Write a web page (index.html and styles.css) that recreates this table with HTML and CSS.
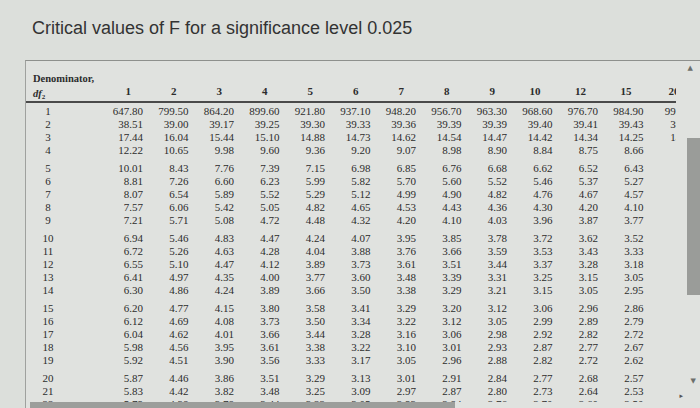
FILE: index.html
```html
<!DOCTYPE html>
<html lang="en">
<head>
<meta charset="utf-8">
<title>Critical values of F</title>
<link rel="stylesheet" href="styles.css">
</head>
<body>
<h1 class="title">Critical values of F for a significance level 0.025</h1>
<div class="panel">
  <div class="viewport">
    <div class="clip">
      <table class="ftable">
        <colgroup>
          <col class="c-label"><col class="c-first">
          <col class="c-num"><col class="c-num"><col class="c-num"><col class="c-num"><col class="c-num"><col class="c-num"><col class="c-num"><col class="c-num"><col class="c-num"><col class="c-num"><col class="c-num">
          <col class="c-last">
        </colgroup>
        <thead>
          <tr>
            <th class="denom">Denominator,<br><i>df</i><sub>2</sub></th>
            <th>1</th><th>2</th><th>3</th><th>4</th><th>5</th><th>6</th><th>7</th><th>8</th><th>9</th><th>10</th><th>12</th><th>15</th><th class="last">20</th>
          </tr>
        </thead>
        <tbody>
          <tr class="first"><td>1</td><td>647.80</td><td>799.50</td><td>864.20</td><td>899.60</td><td>921.80</td><td>937.10</td><td>948.20</td><td>956.70</td><td>963.30</td><td>968.60</td><td>976.70</td><td>984.90</td><td>993.10</td></tr>
          <tr><td>2</td><td>38.51</td><td>39.00</td><td>39.17</td><td>39.25</td><td>39.30</td><td>39.33</td><td>39.36</td><td>39.39</td><td>39.39</td><td>39.40</td><td>39.41</td><td>39.43</td><td>39.45</td></tr>
          <tr><td>3</td><td>17.44</td><td>16.04</td><td>15.44</td><td>15.10</td><td>14.88</td><td>14.73</td><td>14.62</td><td>14.54</td><td>14.47</td><td>14.42</td><td>14.34</td><td>14.25</td><td>14.17</td></tr>
          <tr><td>4</td><td>12.22</td><td>10.65</td><td>9.98</td><td>9.60</td><td>9.36</td><td>9.20</td><td>9.07</td><td>8.98</td><td>8.90</td><td>8.84</td><td>8.75</td><td>8.66</td><td></td></tr>
          <tr class="group"><td>5</td><td>10.01</td><td>8.43</td><td>7.76</td><td>7.39</td><td>7.15</td><td>6.98</td><td>6.85</td><td>6.76</td><td>6.68</td><td>6.62</td><td>6.52</td><td>6.43</td><td></td></tr>
          <tr><td>6</td><td>8.81</td><td>7.26</td><td>6.60</td><td>6.23</td><td>5.99</td><td>5.82</td><td>5.70</td><td>5.60</td><td>5.52</td><td>5.46</td><td>5.37</td><td>5.27</td><td></td></tr>
          <tr><td>7</td><td>8.07</td><td>6.54</td><td>5.89</td><td>5.52</td><td>5.29</td><td>5.12</td><td>4.99</td><td>4.90</td><td>4.82</td><td>4.76</td><td>4.67</td><td>4.57</td><td></td></tr>
          <tr><td>8</td><td>7.57</td><td>6.06</td><td>5.42</td><td>5.05</td><td>4.82</td><td>4.65</td><td>4.53</td><td>4.43</td><td>4.36</td><td>4.30</td><td>4.20</td><td>4.10</td><td></td></tr>
          <tr><td>9</td><td>7.21</td><td>5.71</td><td>5.08</td><td>4.72</td><td>4.48</td><td>4.32</td><td>4.20</td><td>4.10</td><td>4.03</td><td>3.96</td><td>3.87</td><td>3.77</td><td></td></tr>
          <tr class="group"><td>10</td><td>6.94</td><td>5.46</td><td>4.83</td><td>4.47</td><td>4.24</td><td>4.07</td><td>3.95</td><td>3.85</td><td>3.78</td><td>3.72</td><td>3.62</td><td>3.52</td><td></td></tr>
          <tr><td>11</td><td>6.72</td><td>5.26</td><td>4.63</td><td>4.28</td><td>4.04</td><td>3.88</td><td>3.76</td><td>3.66</td><td>3.59</td><td>3.53</td><td>3.43</td><td>3.33</td><td></td></tr>
          <tr><td>12</td><td>6.55</td><td>5.10</td><td>4.47</td><td>4.12</td><td>3.89</td><td>3.73</td><td>3.61</td><td>3.51</td><td>3.44</td><td>3.37</td><td>3.28</td><td>3.18</td><td></td></tr>
          <tr><td>13</td><td>6.41</td><td>4.97</td><td>4.35</td><td>4.00</td><td>3.77</td><td>3.60</td><td>3.48</td><td>3.39</td><td>3.31</td><td>3.25</td><td>3.15</td><td>3.05</td><td></td></tr>
          <tr><td>14</td><td>6.30</td><td>4.86</td><td>4.24</td><td>3.89</td><td>3.66</td><td>3.50</td><td>3.38</td><td>3.29</td><td>3.21</td><td>3.15</td><td>3.05</td><td>2.95</td><td></td></tr>
          <tr class="group"><td>15</td><td>6.20</td><td>4.77</td><td>4.15</td><td>3.80</td><td>3.58</td><td>3.41</td><td>3.29</td><td>3.20</td><td>3.12</td><td>3.06</td><td>2.96</td><td>2.86</td><td></td></tr>
          <tr><td>16</td><td>6.12</td><td>4.69</td><td>4.08</td><td>3.73</td><td>3.50</td><td>3.34</td><td>3.22</td><td>3.12</td><td>3.05</td><td>2.99</td><td>2.89</td><td>2.79</td><td></td></tr>
          <tr><td>17</td><td>6.04</td><td>4.62</td><td>4.01</td><td>3.66</td><td>3.44</td><td>3.28</td><td>3.16</td><td>3.06</td><td>2.98</td><td>2.92</td><td>2.82</td><td>2.72</td><td></td></tr>
          <tr><td>18</td><td>5.98</td><td>4.56</td><td>3.95</td><td>3.61</td><td>3.38</td><td>3.22</td><td>3.10</td><td>3.01</td><td>2.93</td><td>2.87</td><td>2.77</td><td>2.67</td><td></td></tr>
          <tr><td>19</td><td>5.92</td><td>4.51</td><td>3.90</td><td>3.56</td><td>3.33</td><td>3.17</td><td>3.05</td><td>2.96</td><td>2.88</td><td>2.82</td><td>2.72</td><td>2.62</td><td></td></tr>
          <tr class="group"><td>20</td><td>5.87</td><td>4.46</td><td>3.86</td><td>3.51</td><td>3.29</td><td>3.13</td><td>3.01</td><td>2.91</td><td>2.84</td><td>2.77</td><td>2.68</td><td>2.57</td><td></td></tr>
          <tr><td>21</td><td>5.83</td><td>4.42</td><td>3.82</td><td>3.48</td><td>3.25</td><td>3.09</td><td>2.97</td><td>2.87</td><td>2.80</td><td>2.73</td><td>2.64</td><td>2.53</td><td></td></tr>
          <tr><td>22</td><td>5.79</td><td>4.38</td><td>3.78</td><td>3.44</td><td>3.22</td><td>3.05</td><td>2.93</td><td>2.84</td><td>2.76</td><td>2.70</td><td>2.60</td><td>2.50</td><td></td></tr>
        </tbody>
      </table>
    </div>
    <div class="hscroll"><div class="hthumb"></div></div>
  </div>
  <div class="vscroll">
    <span class="arrow up">&#9650;</span>
    <div class="vthumb"></div>
    <span class="arrow down">&#9660;</span>
    <span class="arrow right">&#9656;</span>
  </div>
</div>
</body>
</html>
```

FILE: styles.css
```css
* { box-sizing: border-box; }

html, body {
  margin: 0;
  padding: 0;
  background: #dcdfdb;
  width: 700px;
  height: 408px;
  overflow: hidden;
}

.title {
  margin: 17px 0 0 32px;
  font-family: "Liberation Sans", Arial, sans-serif;
  font-size: 18px;
  line-height: 22px;
  font-weight: normal;
  color: #333;
}

.panel {
  margin: 21px 0 0 25px;
  height: 348px;
  display: flex;
  border-left: 1px solid #9fa19e;
  border-top: 1px solid #8e908d;
  background: #e0e2df;
}

.viewport {
  width: 650px;
  display: flex;
  flex-direction: column;
}

.clip {
  flex: 1;
  overflow: hidden;
}

.ftable {
  table-layout: fixed;
  width: 669px;
  border-collapse: collapse;
  border-spacing: 0;
  font-family: "Liberation Serif", "Times New Roman", serif;
  font-size: 11px;
  color: #2c2c2c;
}

.c-label { width: 44px; }
.c-first { width: 73px; }
.c-num { width: 45.5px; }
.c-last { width: 51.5px; }

.ftable thead th {
  height: 38px;
  padding: 0 12px 3px 0;
  vertical-align: bottom;
  text-align: right;
  font-weight: bold;
  font-size: 11px;
  line-height: 14px;
  border-bottom: 2px solid #4a4a4a;
}

.ftable thead th.last {
  text-align: left;
  padding-left: 25px;
  padding-right: 0;
}

.ftable thead th.denom {
  text-align: left;
  vertical-align: top;
  white-space: nowrap;
  padding: 10px 0 0 7px;
  font-size: 10.5px;
  line-height: 15px;
}

.denom i { font-style: italic; }
.denom sub { font-size: 7px; line-height: 0; vertical-align: -2px; }

.ftable td {
  height: 13px;
  padding: 0;
  line-height: 13px;
  text-align: right;
  white-space: nowrap;
}

.ftable td:first-child {
  text-align: center;
}

.ftable tr.first td { padding-top: 2px; height: 15px; }
.ftable tr.group td { padding-top: 5px; height: 18px; }

.hscroll {
  height: 6px;
  flex: none;
  padding-left: 4px;
}

.hthumb {
  width: 425px;
  height: 6px;
  background: #9c9e9b;
}

.vscroll {
  width: 24px;
  display: flex;
  flex-direction: column;
  align-items: flex-end;
  font-family: "DejaVu Sans", sans-serif;
  color: #6d6f6c;
}

.arrow {
  font-size: 7px;
  line-height: 8px;
}

.arrow.up {
  margin-top: 3px;
  margin-right: 7px;
}

.vthumb {
  margin-top: 66px;
  width: 13px;
  height: 157px;
  background: #9a9c99;
}

.arrow.down {
  margin-top: auto;
  margin-right: 4px;
}

.arrow.right {
  margin: 7px 17px 8px 0;
  color: #555;
}
```
